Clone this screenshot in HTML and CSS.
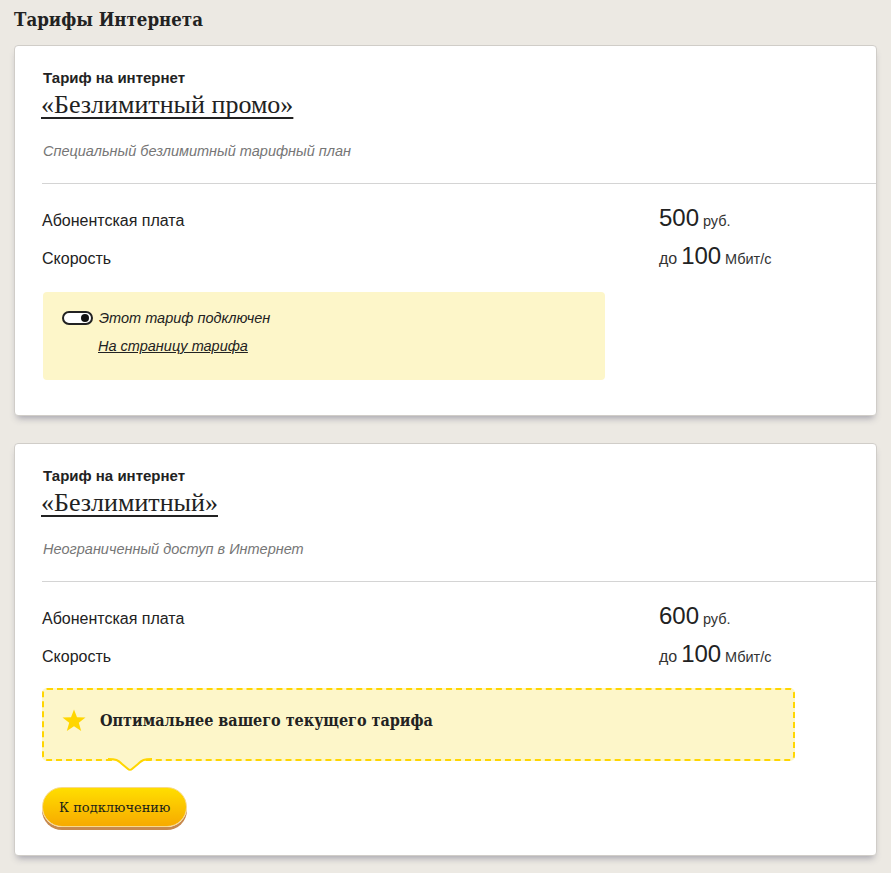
FILE: index.html
```html
<!DOCTYPE html>
<html lang="ru">
<head>
<meta charset="utf-8">
<title>Тарифы Интернета</title>
<link rel="stylesheet" href="styles.css">
</head>
<body>
<h1 class="page-title">Тарифы Интернета</h1>

<section class="card">
  <div class="card-head">
    <div class="kind">Тариф на интернет</div>
    <a class="name" href="#">«Безлимитный промо»</a>
    <div class="desc">Специальный безлимитный тарифный план</div>
  </div>
  <div class="card-body">
    <div class="row">
      <div class="label">Абонентская плата</div>
      <div class="value"><span class="num">500</span> <span class="unit">руб.</span></div>
    </div>
    <div class="row">
      <div class="label">Скорость</div>
      <div class="value"><span class="pre">до</span> <span class="num">100</span> <span class="unit">Мбит/с</span></div>
    </div>
    <div class="current">
      <div class="current-line">
        <svg class="toggle" width="31" height="14" viewBox="0 0 31 14">
          <rect x="1" y="1" width="29" height="12" rx="6" fill="#fff" stroke="#222" stroke-width="2"/>
          <circle cx="23" cy="7" r="4" fill="#111"/>
        </svg>
        <span class="current-text">Этот тариф подключен</span>
      </div>
      <a class="current-link" href="#">На страницу тарифа</a>
    </div>
  </div>
</section>

<section class="card">
  <div class="card-head">
    <div class="kind">Тариф на интернет</div>
    <a class="name" href="#">«Безлимитный»</a>
    <div class="desc">Неограниченный доступ в Интернет</div>
  </div>
  <div class="card-body card-body--offer">
    <div class="row">
      <div class="label">Абонентская плата</div>
      <div class="value"><span class="num">600</span> <span class="unit">руб.</span></div>
    </div>
    <div class="row">
      <div class="label">Скорость</div>
      <div class="value"><span class="pre">до</span> <span class="num">100</span> <span class="unit">Мбит/с</span></div>
    </div>
    <div class="hint">
      <svg class="star" width="24" height="23" viewBox="0 0 24 23">
        <path d="M12 0.5 L15 8.3 L23.5 8.6 L16.8 13.8 L19.2 22 L12 17.2 L4.8 22 L7.2 13.8 L0.5 8.6 L9 8.3 Z" fill="#ffd600"/>
      </svg>
      <span class="hint-text">Оптимальнее вашего текущего тарифа</span>
      <svg class="tail" width="44" height="14" viewBox="0 0 44 14">
        <path d="M0 0 H44 L44 1 C36 1 34 2 30 6 L24 11 C23 12 21 12 20 11 L14 6 C10 2 8 1 0 1 Z" fill="#fdf6c9"/>
        <path d="M0 1 C8 1 10 2 14 6 L20 11 C21 12 23 12 24 11 L30 6 C34 2 36 1 44 1" fill="none" stroke="#ffd600" stroke-width="2"/>
      </svg>
    </div>
    <a class="btn" href="#">К подключению</a>
  </div>
</section>
</body>
</html>
```

FILE: styles.css
```css
html, body {
  margin: 0;
  padding: 0;
}
body {
  background: #ece9e3;
  font-family: "Liberation Sans", Arial, sans-serif;
  color: #222;
  padding: 0 14px 16px;
}
.page-title {
  font-family: "DejaVu Serif", serif;
  font-stretch: condensed;
  font-weight: bold;
  font-size: 18.5px;
  line-height: 22px;
  margin: 0;
  padding: 9px 0 14px;
  color: #222;
}
.card {
  background: #fff;
  border: 1px solid #d0cdc8;
  border-radius: 4px;
  box-shadow: 0 5px 7px -3px rgba(70, 70, 100, 0.45);
  margin-bottom: 27px;
}
.card-head {
  padding: 22px 28px 22px 1px;
  border-bottom: 1px solid #d4d4d4;
  margin-left: 27px;
}
.kind {
  font-weight: bold;
  font-size: 15px;
  line-height: 20px;
  color: #222;
}
.name {
  display: inline-block;
  font-family: "Liberation Serif", serif;
  font-size: 26px;
  line-height: 30px;
  color: #222;
  text-decoration: underline;
  text-decoration-thickness: 2px;
  text-decoration-skip-ink: none;
  text-underline-offset: 4px;
  margin-left: -2px;
  margin-top: 2px;
}
.desc {
  font-style: italic;
  font-size: 14.5px;
  line-height: 20px;
  color: #767676;
  margin-top: 21px;
}
.card-body {
  padding: 20px 28px 35px 27px;
}
.card-body--offer {
  padding-bottom: 28px;
}
.row {
  display: flex;
  align-items: baseline;
  height: 38px;
}
.label {
  width: 617px;
  font-size: 16px;
  color: #222;
}
.value {
  font-size: 14px;
  color: #333;
}
.num {
  font-size: 24px;
  color: #222;
}
.unit {
  font-size: 14.5px;
  color: #333;
}
.pre {
  font-size: 16px;
}
.current {
  margin-top: 12px;
  width: 562px;
  height: 88px;
  box-sizing: border-box;
  background: #fdf6c9;
  border-radius: 4px;
  padding: 16px 19px;
  margin-left: 1px;
}
.current-line {
  display: flex;
  align-items: center;
  gap: 6px;
  height: 20px;
}
.toggle {
  display: block;
}
.current-text {
  font-style: italic;
  font-size: 14.5px;
  color: #222;
}
.current-link {
  display: inline-block;
  margin-top: 8px;
  margin-left: 36px;
  font-style: italic;
  font-size: 14.5px;
  line-height: 20px;
  color: #222;
  text-decoration: underline;
}
.hint {
  position: relative;
  margin-top: 10px;
  width: 753px;
  height: 73px;
  box-sizing: border-box;
  background: #fdf6c9;
  border: 2px dashed #ffd600;
  border-radius: 5px;
  display: flex;
  align-items: center;
  padding: 0 0 8px 18px;
}
.star {
  display: block;
  margin-right: 14px;
}
.hint-text {
  font-family: "DejaVu Serif", serif;
  font-stretch: condensed;
  font-weight: bold;
  font-size: 16px;
  color: #222;
}
.tail {
  position: absolute;
  left: 64px;
  bottom: -13px;
}
.btn {
  display: flex;
  width: max-content;
  margin-top: 26px;
  height: 38px;
  align-items: center;
  padding: 0 16px;
  border-radius: 20px;
  background: linear-gradient(#ffde00, #f7aa00);
  border: 1px solid #f8d98a;
  box-shadow: 0 3px 0 #c7894e;
  font-family: "DejaVu Serif", serif;
  font-size: 13px;
  color: #1c2418;
  text-decoration: none;
}
```
